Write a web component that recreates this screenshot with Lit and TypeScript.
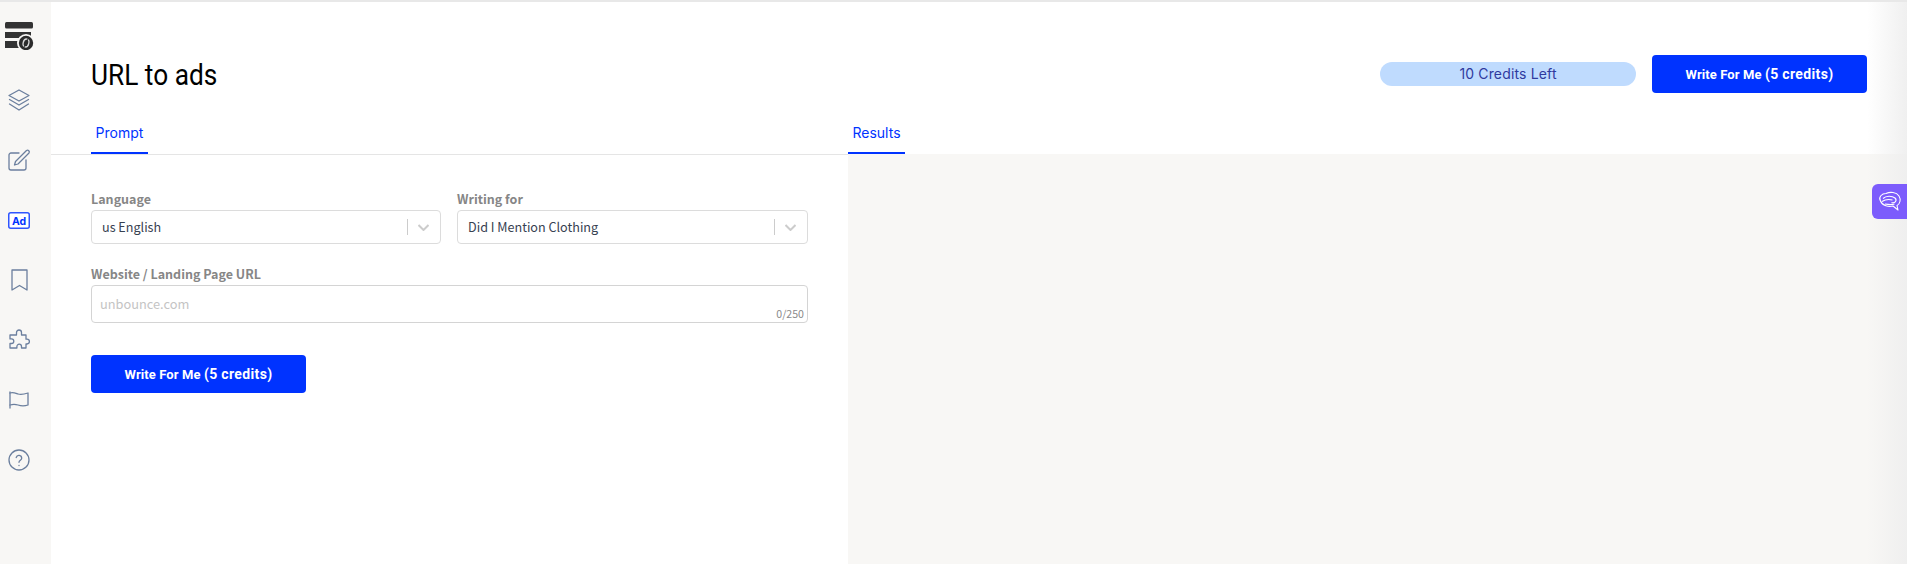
import { LitElement, html, css, svg } from "lit";
import { customElement } from "lit/decorators.js";

const icon = (body: unknown) => html`<svg width="24" height="24" viewBox="0 0 24 24" fill="none" stroke="#6b7f9e" stroke-width="1.3" stroke-linecap="round" stroke-linejoin="round">${body}</svg>`;

const chevron = html`<svg class="chev" width="11" height="7" viewBox="0 0 11 7" fill="none" stroke="#ccc" stroke-width="2"><path d="M.5 1l5 5 5-5"/></svg>`;

@customElement("app-root")
export class AppRoot extends LitElement {
  static styles = css`
    :host { display: flex; height: 564px; overflow: hidden; background: #fff; font-family: "Noto Sans CJK SC", sans-serif; position: relative; border-top: 2px solid #e8e8e8; box-sizing: border-box; }
    .side { width: 51px; flex: none; background: #f8f7f5; display: flex; flex-direction: column; align-items: flex-start; padding-top: 18px; box-sizing: border-box; }
    .logo { height: 30px; margin-bottom: 20px; display: block; }
    .navi { height: 60px; width: 24px; margin-left: 7px; display: flex; align-items: center; justify-content: center; }
    .main { flex: 1; display: flex; flex-direction: column; min-width: 0; }
    .head { height: 116px; flex: none; display: flex; justify-content: space-between; padding: 53px 40px 0; box-sizing: border-box; }
    h1 { margin: 0; font: 400 30px/40px Roboto, sans-serif; color: #000; transform: scaleX(.875); transform-origin: left; }
    .actions { display: flex; align-items: flex-start; gap: 16px; }
    .pill { width: 256px; height: 24px; margin-top: 7px; border-radius: 12px; background: #bfdbfe; color: #2f3a9e; font: 400 14px/24px Inter, sans-serif; letter-spacing: .15px; text-align: center; }
    .btn { width: 215px; height: 38px; background: #0033ff; color: #fff; border: 0; border-radius: 4px; font: 700 13px/38px Roboto, sans-serif; letter-spacing: .1px; padding: 0; text-align: center; display: block; }
    .btn b { font-size: 14px; font-weight: 700; letter-spacing: .35px; }
    .cols { flex: 1; display: flex; min-height: 0; }
    .left { width: 797px; flex: none; }
    .right { flex: 1; display: flex; flex-direction: column; }
    .tabs { height: 37px; box-sizing: border-box; padding-left: 40px; border-bottom: 1px solid #e5e5e5; }
    .right .tabs { height: 36px; padding-left: 0; border: 0; }
    .tab { display: block; width: 57px; height: 36px; box-sizing: border-box; border-bottom: 2px solid #0033ff; color: #0033ff; font: 400 14px/30px Inter, sans-serif; text-align: center; }
    .panel { flex: 1; background: #f8f7f5; }
    .form { padding: 35px 40px 0; width: 717px; box-sizing: content-box; }
    .row { display: grid; grid-template-columns: 350px 351px; gap: 16px; }
    label { display: block; font: 700 12.5px/18px "Noto Sans CJK SC", sans-serif; color: #868686; margin-bottom: 2px; }
    .select { height: 34px; box-sizing: border-box; border: 1px solid #dcdcdc; border-radius: 4px; display: flex; align-items: center; padding-left: 10px; font: 400 12.6px/18px "Noto Sans CJK SC", sans-serif; color: #374151; }
    .select span { flex: 1; }
    .sep { width: 1px; height: 16px; background: #ccc; }
    .chev { margin: 0 11px 0 10px; }
    .field { margin-top: 21px; }
    .input { height: 38px; box-sizing: border-box; border: 1px solid #d4d4d4; border-radius: 4px; position: relative; padding: 9px 8px; font: 400 12.8px/18px "Noto Sans CJK SC", sans-serif; color: #c4c4c4; }
    .count { position: absolute; right: 3px; bottom: 1px; font: 400 10.6px/14px "Noto Sans CJK SC", sans-serif; color: #8a8a8a; }
    .form .btn { margin-top: 32px; }
    .brain { position: absolute; right: 0; top: 182px; width: 35px; height: 35px; background: #7c5cfc; border-radius: 6px 0 0 6px; display: flex; align-items: center; justify-content: center; }
    .fade { position: absolute; right: 0; top: 0; bottom: 0; width: 40px; background: linear-gradient(90deg, rgba(238,238,238,0), rgba(238,238,238,.9)); pointer-events: none; }
  `;

  render() {
    const items = [
      svg`<path d="M12 2l10 5.500L12 13 2 7.500z"/><path d="M2.500 11.500L12 17l9.500-5.500"/><path d="M2.500 16L12 22l9.500-6"/>`,
      svg`<path d="M12 5H4a2 2 0 0 0-2 2v13a2 2 0 0 0 2 2h13a2 2 0 0 0 2-2v-8"/><path d="M19.500 2.500a1.800 1.800 0 0 1 2.500 2.500L11 16l-3.500 1 1-3.500z"/>`,
      null,
      svg`<path d="M5 2h15v20l-7.500-4.500L5 22z"/>`,
      svg`<path d="M9.500 4.500a2.500 2.500 0 0 1 5 0V7H19v4.200h1a2.400 2.400 0 0 1 0 4.800h-1v4h-4.500v-1.500a2.300 2.300 0 0 0-4.600 0V20H3v-4.500h1.500a2.300 2.300 0 0 0 0-4.600H3V7h6.500z"/>`,
      svg`<path d="M3 4v16"/><path d="M3 5c3-1 5 0 8 1s7 0 10-1v12c-3 1-7 1-10 0s-5-1-8 0"/>`,
      svg`<circle cx="12" cy="12" r="10"/><path d="M9.200 9.500a2.800 2.800 0 0 1 5.500.8c0 1.800-2.700 2.200-2.700 4"/><path d="M12 17.500h.01"/>`,
    ];
    return html`
      <nav class="side">
        <svg class="logo" width="51" height="30" viewBox="0 20 51 30">
          <rect x="5" y="22" width="28" height="6.500" rx="1.500" fill="#333"/>
          <rect x="5" y="32" width="26" height="6" fill="#333"/>
          <rect x="5" y="41" width="14" height="7" fill="#333"/>
          <circle cx="26" cy="43" r="9" fill="#f8f7f5"/>
          <circle cx="26" cy="43" r="7.200" fill="#2b2b2b"/>
          <ellipse cx="26" cy="43" rx="2.800" ry="4" fill="none" stroke="#ddd" stroke-width="1.300" transform="rotate(15 26 43)"/>
          <path d="M28.500 38l-5 10" stroke="#2b2b2b" stroke-width="1"/>
        </svg>
        ${items.map((b) => html`<div class="navi">${b ? icon(b) : html`<svg width="22" height="17" viewBox="0 0 22 17"><rect x=".75" y=".75" width="20.500" height="15.500" rx="2" fill="#fff" stroke="#2f55ff" stroke-width="1.500"/><text x="11" y="12.500" text-anchor="middle" font-family="Inter" font-weight="700" font-size="10.500" fill="#0033ff">Ad</text></svg>`}</div>`)}
      </nav>
      <div class="main">
        <header class="head">
          <h1>URL to ads</h1>
          <div class="actions">
            <div class="pill">10 Credits Left</div>
            <button class="btn">Write For Me <b>(5 credits)</b></button>
          </div>
        </header>
        <div class="cols">
          <section class="left">
            <div class="tabs"><span class="tab">Prompt</span></div>
            <div class="form">
              <div class="row">
                <div><label>Language</label><div class="select"><span>us English</span><i class="sep"></i>${chevron}</div></div>
                <div><label>Writing for</label><div class="select"><span>Did I Mention Clothing</span><i class="sep"></i>${chevron}</div></div>
              </div>
              <div class="field"><label>Website / Landing Page URL</label>
                <div class="input">unbounce.com<span class="count">0/250</span></div>
              </div>
              <button class="btn">Write For Me <b>(5 credits)</b></button>
            </div>
          </section>
          <section class="right">
            <div class="tabs"><span class="tab">Results</span></div>
            <div class="panel"></div>
          </section>
        </div>
      </div>
      <div class="fade"></div>
      <div class="brain"><svg width="24" height="21" viewBox="0 0 24 21" fill="none" stroke="#fff" stroke-width="1.100" stroke-linejoin="round"><path d="M2.500 10C0 6 4 2.500 8 2.500 12 .5 18.500 1 21 5c2.200 3.500 1 8-2 9.500l1 4.500-5-4C10.500 16 4.500 15 2.500 10z"/><path d="M5 7.500C8 4.500 14 4.500 17 7c2.500 2.500 0 5.500-3.500 4.500"/><path d="M4 10.500C7 8.500 11 8 14.500 9"/><path d="M7 13c3 .5 6 1 9.500 0"/></svg></div>
    `;
  }
}
